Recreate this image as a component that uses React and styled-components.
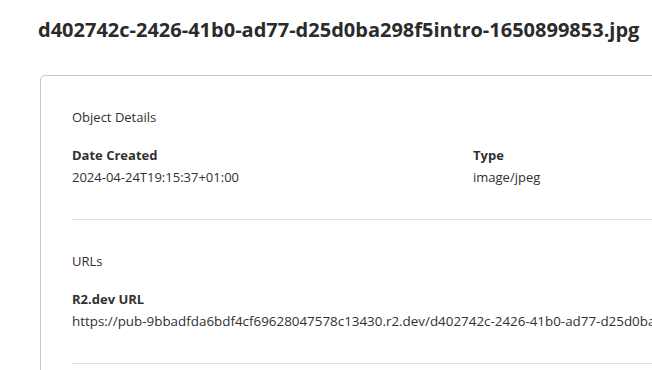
import React from "react";
import styled, { createGlobalStyle } from "styled-components";

const GlobalStyle = createGlobalStyle`
  html, body {
    margin: 0;
    padding: 0;
    background: #ffffff;
    overflow: hidden;
  }
  body {
    font-family: "Open Sans", "Noto Sans", sans-serif;
    color: #313131;
  }
`;

const Page = styled.div`
  padding: 18px 0 0 38px;
  width: 900px;
`;

const Title = styled.h1`
  margin: 0;
  font-size: 20px;
  line-height: 24px;
  font-weight: 700;
  color: #2b2b2b;
`;

const Card = styled.section`
  margin: 33px 0 0 2px;
  border: 1px solid #c8c8c8;
  border-radius: 5px;
  padding: 32px 31px 0;
`;

const Section = styled.div`
  padding-bottom: 33px;
  border-bottom: 1px solid #e0e0e0;
  margin-bottom: 32px;
`;

const SectionTitle = styled.h2`
  margin: 0 0 20px;
  font-size: 13px;
  line-height: 18px;
  font-weight: 400;
`;

const Fields = styled.div`
  display: grid;
  grid-template-columns: ${(p) => p.$cols || "1fr"};
`;

const Field = styled.div`
  display: flex;
  flex-direction: column;
  gap: 4px;
`;

const Label = styled.div`
  font-size: 13px;
  line-height: 18px;
  font-weight: 700;
`;

const Value = styled.div`
  font-size: ${(p) => p.$size || "13px"};
  line-height: 18px;
  white-space: nowrap;
`;

export default function App() {
  return (
    <>
      <GlobalStyle />
      <Page>
        <Title>d402742c-2426-41b0-ad77-d25d0ba298f5intro-1650899853.jpg</Title>
        <Card>
          <Section>
            <SectionTitle>Object Details</SectionTitle>
            <Fields $cols="401px 1fr">
              <Field>
                <Label>Date Created</Label>
                <Value>2024-04-24T19:15:37+01:00</Value>
              </Field>
              <Field>
                <Label>Type</Label>
                <Value>image/jpeg</Value>
              </Field>
            </Fields>
          </Section>
          <Section>
            <SectionTitle>URLs</SectionTitle>
            <Fields>
              <Field>
                <Label>R2.dev URL</Label>
                <Value $size="13.4px">
                  https://pub-9bbadfda6bdf4cf69628047578c13430.r2.dev/d402742c-2426-41b0-ad77-d25d0ba298f5intro-1650899853.jpg
                </Value>
              </Field>
            </Fields>
          </Section>
        </Card>
      </Page>
    </>
  );
}
